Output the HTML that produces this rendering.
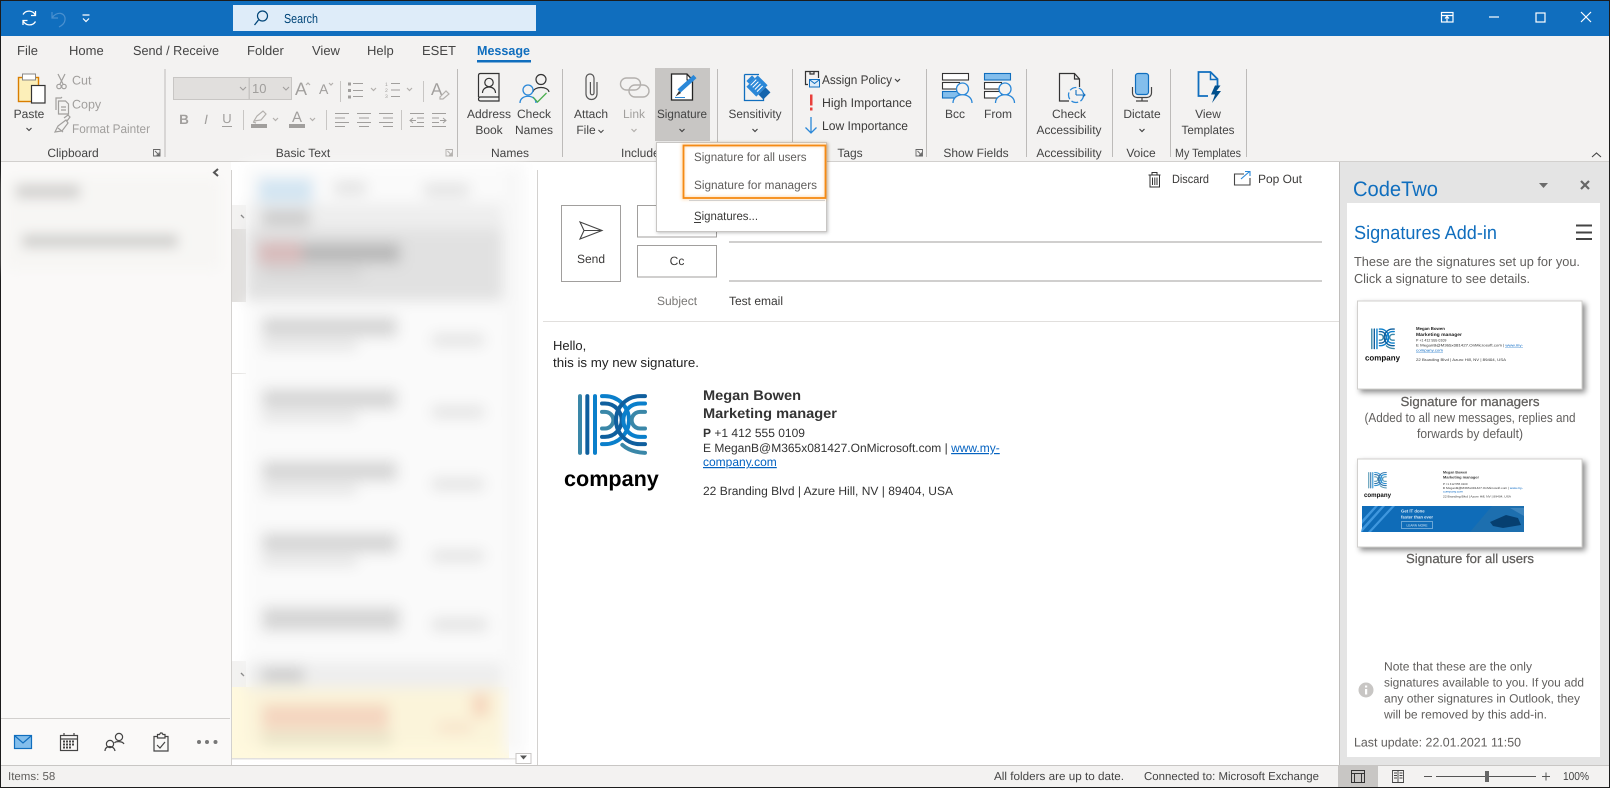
<!DOCTYPE html>
<html><head><meta charset="utf-8"><style>
html,body{margin:0;padding:0;width:1610px;height:788px;overflow:hidden;background:#fff}
svg{display:block;position:absolute;left:0;top:0}
text{font-family:"Liberation Sans",sans-serif;font-size:13px;fill:#3b3a39;text-rendering:geometricPrecision}
.c{text-anchor:middle}
.r{font-size:12px;fill:#444}
.s{font-size:12px;fill:#605e5c}
.p{fill:#605e5c}
.sig{font-size:12px;fill:#333}
.b{font-weight:bold}
.k{fill:none;stroke:#444;stroke-width:1.2}
.gk{fill:none;stroke:#b3b0ad;stroke-width:1.2}
.bl{fill:none;stroke:#106ebe;stroke-width:1.3}
.sep{fill:#bdbbb9}
.tiny{font-size:4px;fill:#444}
</style></head><body>
<svg width="1610" height="788" viewBox="0 0 1610 788" xmlns="http://www.w3.org/2000/svg">
<defs>
<filter id="bl" filterUnits="userSpaceOnUse" x="200" y="150" width="360" height="630"><feGaussianBlur stdDeviation="7"/></filter>
<filter id="bl2" filterUnits="userSpaceOnUse" x="0" y="160" width="231" height="120"><feGaussianBlur stdDeviation="6"/></filter>
<filter id="sh" x="-10%" y="-10%" width="125%" height="125%"><feDropShadow dx="3" dy="3" stdDeviation="3" flood-color="#000" flood-opacity=".45"/></filter>
<filter id="sh2" x="-10%" y="-10%" width="120%" height="120%"><feDropShadow dx="1" dy="1" stdDeviation="1.5" flood-color="#000" flood-opacity=".25"/></filter>
<filter id="gl" x="-10%" y="-20%" width="120%" height="140%"><feGaussianBlur stdDeviation="1.6"/></filter>
<filter id="tb"><feGaussianBlur stdDeviation=".2"/></filter>
<symbol id="logo" viewBox="75 60 225 200">
<g fill="none" stroke-width="12" stroke-linecap="round">
<path d="M90 78V248" stroke="#3a87a8"/><path d="M112 78V248" stroke="#0f5f9e"/><path d="M135 78V248" stroke="#0a7fcb"/>
<path d="M156 125H165A25 25 0 0 1 165 175H156" stroke="#3a87a8"/>
<path d="M156 78H165A72 72 0 0 1 165 222H156" stroke="#0a7fcb"/>
<path d="M156 200H165C195 200 215 175 215 150C215 125 195 100 165 100H156" stroke="#0f5f9e"/>
<path d="M285 125H270A25 25 0 0 0 270 175H285" stroke="#3a87a8"/>
<path d="M285 100H270C240 100 220 125 220 150C220 175 240 200 270 200H285" stroke="#0a7fcb"/>
<path d="M285 78H270A72 72 0 0 0 270 222H285" stroke="#0f5f9e"/>
<path d="M217 224C235 240 260 247 285 248" stroke="#3a87a8"/>
</g>
</symbol>
</defs>

<rect width="1610" height="788" fill="#1c1c1c"/>
<rect x="1" y="1" width="1608" height="35" fill="#106ebe"/>
<rect x="1" y="36" width="1608" height="125" fill="#f3f2f1"/>
<rect x="1" y="161" width="1608" height="1" fill="#d2d0ce"/>
<rect x="1" y="162" width="1608" height="603" fill="#fff"/>
<rect x="1" y="162" width="230" height="603" fill="#faf9f8"/>
<rect x="231" y="170" width="1" height="595" fill="#d2d0ce"/>
<rect x="537" y="170" width="1" height="595" fill="#d2d0ce"/>

<!-- blurred folder -->
<g filter="url(#bl2)">
<rect x="6" y="178" width="215" height="92" fill="#f7f6f4"/>
<rect x="16" y="184" width="64" height="15" fill="#d4d3d1"/>
<rect x="22" y="234" width="156" height="14" fill="#d2d1cf"/>
</g>
<path d="M218 169l-4 3.500 4 3.500" fill="none" stroke="#555" stroke-width="2"/>

<!-- message list -->
<rect x="232" y="205" width="14" height="24" fill="#f3f2f1"/>
<rect x="232" y="229" width="14" height="73" fill="#e1dfdd"/>
<rect x="232" y="373" width="14" height="1" fill="#e1dfdd"/>
<rect x="232" y="661" width="14" height="26" fill="#f3f2f1"/>
<rect x="232" y="687" width="277" height="71" fill="#fff9de"/>
<rect x="232" y="758" width="285" height="1.500" fill="#e1dfdd"/>
<path d="M241 215l3 3M241 673l3 3" stroke="#555" stroke-width="1.400"/>
<g filter="url(#bl)">
<rect x="245" y="165" width="280" height="500" fill="#fafafa"/>
<rect x="505" y="165" width="20" height="590" fill="#f8f8f8"/>
<rect x="258" y="178" width="55" height="26" fill="#d3e5f2"/>
<rect x="334" y="182" width="32" height="12" fill="#e0e0e0"/>
<rect x="424" y="184" width="45" height="12" fill="#e0e0e0"/>
<rect x="245" y="203" width="258" height="28" fill="#eeeeee"/>
<rect x="262" y="210" width="48" height="16" fill="#cbcbcb"/>
<rect x="245" y="229" width="258" height="72" fill="#e1e1e1"/>
<rect x="258" y="241" width="44" height="24" fill="#d8bcbc"/>
<rect x="302" y="243" width="98" height="20" fill="#b8b8b8"/>
<rect x="262" y="268" width="100" height="9" fill="#d2d2d2"/>
<g fill="#d6d6d6">
<rect x="262" y="317" width="135" height="20"/><rect x="262" y="341" width="95" height="9" fill="#e2e2e2"/><rect x="432" y="334" width="52" height="12" fill="#e2e2e2"/>
<rect x="262" y="389" width="135" height="20"/><rect x="262" y="413" width="95" height="9" fill="#e2e2e2"/><rect x="432" y="406" width="52" height="12" fill="#e2e2e2"/>
<rect x="262" y="461" width="135" height="20"/><rect x="262" y="485" width="95" height="9" fill="#e2e2e2"/><rect x="432" y="478" width="52" height="12" fill="#e2e2e2"/>
<rect x="262" y="533" width="135" height="20"/><rect x="262" y="557" width="95" height="9" fill="#e2e2e2"/><rect x="432" y="550" width="52" height="12" fill="#e2e2e2"/>
<rect x="262" y="607" width="138" height="24"/><rect x="432" y="618" width="55" height="13" fill="#e2e2e2"/>
</g>
<rect x="245" y="662" width="258" height="26" fill="#eeeeee"/>
<rect x="262" y="667" width="42" height="16" fill="#cecece"/>
<rect x="245" y="688" width="258" height="58" fill="#fbf4da"/>
<rect x="262" y="704" width="127" height="26" fill="#f4d6c0"/>
<rect x="472" y="693" width="17" height="24" fill="#f6d6bd"/>
<rect x="438" y="722" width="34" height="11" fill="#f8e3cb"/>
<rect x="262" y="733" width="130" height="12" fill="#e7e3c8"/>
</g>
<rect x="516" y="753.500" width="15" height="10" fill="#fff" stroke="#c8c6c4"/>
<path d="M520 755.500h7l-3.500 4z" fill="#555"/>

<!-- nav -->
<rect x="1" y="718" width="229" height="1" fill="#d2d0ce"/>
<rect x="14.500" y="735.500" width="17" height="13" fill="#83beec" stroke="#106ebe" stroke-width="1.200"/>
<path d="M15 736l8 7 8-7" fill="none" stroke="#106ebe" stroke-width="1.200"/>
<rect x="60.500" y="735.500" width="17" height="15" class="k"/><path d="M60 739h18M64 733v3M74 733v3" class="k"/>
<path d="M63 741.500h2m1 0h2m1 0h2m1 0h2M63 744.500h2m1 0h2m1 0h2m1 0h2M63 747.500h2m1 0h2m1 0h2" stroke="#444" stroke-width="2" fill="none"/>
<g class="k"><circle cx="110" cy="744" r="3.600"/><path d="M105 751c0-6 9-6 10 0"/><circle cx="119" cy="737" r="3.600"/><path d="M114.500 743c1-2 8-2 9.500 1"/></g>
<g class="k"><path d="M157 736.500h-3v14.500h14v-14.500h-3"/><path d="M157.500 738v-3.500h2l1-1.500h1.500l1 1.500h2v3.500z"/><path d="M157 745l3 3 5-6"/></g>
<g fill="#777"><circle cx="199" cy="742" r="2"/><circle cx="207" cy="742" r="2"/><circle cx="215.500" cy="742" r="2"/></g>

<!-- title bar -->
<g fill="none" stroke="#fff" stroke-width="1.300">
<path d="M23 14.500A7 7 0 0 1 35.500 15.500M35.500 11v4.500h-4.500"/>
<path d="M35.500 21.500A7 7 0 0 1 23 20.500M23 25v-4.500h4.500"/>
</g>
<path d="M52 12v6h6M52 18C56 11 66 12 65 20C64.500 24 61 26 59 27" fill="none" stroke="#4a90cf" stroke-width="1.200"/>
<path d="M82.500 15h7M83 18.500l3 3 3-3" fill="none" stroke="#fff" stroke-width="1.200"/>
<rect x="233" y="5" width="303" height="26" fill="#deecf9"/>
<circle cx="262.500" cy="16" r="5" fill="none" stroke="#004578" stroke-width="1.200"/>
<path d="M258.500 20L254.500 25" stroke="#004578" stroke-width="1.300"/>
<text x="284" y="23" style="fill:#004578" textLength="34" lengthAdjust="spacingAndGlyphs">Search</text>
<g fill="none" stroke="#fff" stroke-width="1.200">
<rect x="1441.500" y="12.500" width="11.500" height="9.500"/><path d="M1441.500 15.500h11.500M1447 22v-5M1445 18.500l2-2 2 2"/>
<path d="M1489 17h10"/><rect x="1536" y="13" width="9" height="9"/><path d="M1581 12l10 10M1591 12l-10 10"/>
</g>

<!-- tabs -->
<text x="17" y="55" style="fill:#444">File</text>
<text x="69" y="55" style="fill:#444">Home</text>
<text x="133" y="55" style="fill:#444" textLength="86" lengthAdjust="spacingAndGlyphs">Send / Receive</text>
<text x="247" y="55" style="fill:#444">Folder</text>
<text x="312" y="55" style="fill:#444">View</text>
<text x="367" y="55" style="fill:#444">Help</text>
<text x="422" y="55" style="fill:#444">ESET</text>
<text x="477" y="55" style="fill:#106ebe;font-weight:bold" textLength="53" lengthAdjust="spacingAndGlyphs">Message</text>
<rect x="477" y="60" width="54" height="2.500" fill="#106ebe"/>

<!-- separators -->
<g class="sep">
<rect x="164.500" y="69" width="1" height="88"/><rect x="457" y="69" width="1" height="88"/><rect x="562" y="69" width="1" height="88"/><rect x="717" y="69" width="1" height="88"/><rect x="792" y="69" width="1" height="88"/><rect x="926" y="69" width="1" height="88"/><rect x="1026" y="69" width="1" height="88"/><rect x="1112" y="69" width="1" height="88"/><rect x="1170" y="69" width="1" height="88"/><rect x="1246" y="69" width="1" height="88"/>
</g>

<!-- clipboard -->
<rect x="18.500" y="77.500" width="20" height="24" fill="#fcefb9" stroke="#d97e00" stroke-width="1.400"/>
<rect x="22.500" y="74" width="13" height="6" fill="#fff" stroke="#8a8886"/>
<rect x="31.500" y="85.500" width="13.500" height="17.500" fill="#fff" stroke="#333" stroke-width="1.200"/>
<text x="29" y="118" class="c r">Paste</text>
<path d="M26.500 128l2.500 2.500 2.500-2.500" fill="none" stroke="#444" stroke-width="1.100"/>
<g class="gk" style="stroke:#a19f9d"><path d="M58 74l5 10M65 74l-5 10"/><circle cx="59" cy="86.500" r="2.200"/><circle cx="64" cy="86.500" r="2.200"/>
<path d="M56 110v-12h5l1-1M58.500 112v-11h7l3 3v10h-10zM61 107h5M61 110h5"/>
<path d="M55 132l3-6 8-6 2 3-6 8zM58 128l5 4M64 118l4-3 2 2-3 4"/></g>
<text x="72" y="84.500" style="fill:#a19f9d;font-size:12.500px">Cut</text>
<text x="72" y="108.500" style="fill:#a19f9d;font-size:12.500px">Copy</text>
<text x="72" y="133" style="fill:#a19f9d;font-size:12.500px" textLength="78" lengthAdjust="spacingAndGlyphs">Format Painter</text>
<text x="73" y="157" class="c" style="font-size:12px;fill:#444">Clipboard</text>
<path d="M153.500 149.500h6.500v6.500h-6.500zM155 151l4 4M159 152.500v2.500h-2.500" fill="none" stroke="#666" stroke-width=".9"/>

<!-- basic text -->
<rect x="173.500" y="77.500" width="75.500" height="22" fill="#e1dfdd" stroke="#c8c6c4"/>
<rect x="249.500" y="77.500" width="42" height="22" fill="#e1dfdd" stroke="#c8c6c4"/>
<text x="252" y="93" style="fill:#a19f9d">10</text>
<path d="M240 87l3 3 3-3M283 87l3 3 3-3" fill="none" stroke="#a19f9d" stroke-width="1.100"/>
<text x="295" y="95" style="font-size:18px;fill:#a19f9d">A</text><path d="M306 85l2-2 2 2" class="gk" stroke-width="1"/>
<text x="319" y="94" style="font-size:14px;fill:#a19f9d">A</text><path d="M329 83l2 2 2-2" class="gk"/>
<rect x="340" y="81" width="1" height="21" fill="#c8c6c4"/>
<path d="M348 84h3M348 90.500h3M348 97h3" stroke="#a19f9d" stroke-width="3"/>
<path d="M353 83.500h10M353 90.500h10M353 96.500h10" stroke="#a19f9d" stroke-width="1"/>
<path d="M371 88l2.500 2.500 2.500-2.500M407 88l2.500 2.500 2.500-2.500" class="gk"/>
<text x="385" y="86" style="font-size:5px;fill:#a19f9d">1</text><text x="385" y="92" style="font-size:5px;fill:#a19f9d">2</text><text x="385" y="98" style="font-size:5px;fill:#a19f9d">3</text>
<path d="M391 83.500h9M391 90h9M391 96.500h9" stroke="#a19f9d" stroke-width="1"/>
<rect x="423" y="81" width="1" height="21" fill="#c8c6c4"/>
<text x="431" y="95" style="font-size:17px;fill:#a19f9d">A</text>
<path d="M440 97l6-6 3 3-6 5h-3z" class="gk"/>
<text x="184" y="124" class="c b" style="font-size:13.500px;fill:#a19f9d">B</text>
<text x="206" y="124" class="c" style="font-style:italic;font-size:13.500px;fill:#a19f9d">I</text>
<text x="227" y="123" class="c" style="fill:#a19f9d">U</text><path d="M222 126.500h10" stroke="#a19f9d"/>
<rect x="243" y="110" width="1" height="20" fill="#c8c6c4"/>
<path d="M254 121l3-5 6-5 3 3-5 6zM253 122l3 1" class="gk"/><rect x="251" y="124" width="16" height="4" fill="#a19f9d"/>
<path d="M273 118l2.500 2.500 2.500-2.500M310 118l2.500 2.500 2.500-2.500" class="gk"/>
<text x="297" y="122" class="c" style="font-size:15px;fill:#a19f9d">A</text><rect x="289" y="124" width="16" height="4" fill="#a19f9d"/>
<rect x="326" y="110" width="1" height="20" fill="#c8c6c4"/>
<path d="M335 113.500h14M335 118h10M335 122.500h14M335 126.500h10M357 113.500h14M359 118h10M357 122.500h14M359 126.500h10M379 113.500h14M383 118h10M379 122.500h14M383 126.500h10" stroke="#a19f9d" fill="none"/>
<rect x="401" y="110" width="1" height="20" fill="#c8c6c4"/>
<path d="M410 113.500h14M417 118h7M417 122.500h7M410 126.500h14M413 118l-3 2.500 3 2.500M410 120.500h6M432 113.500h14M432 118h7M432 122.500h7M432 126.500h14M443 118l3 2.500-3 2.500M440 120.500h6" stroke="#a19f9d" fill="none"/>
<text x="303" y="157" class="c" style="font-size:12px;fill:#444">Basic Text</text>
<path d="M446 149.500h6.500v6.500h-6.500zM447.500 151l4 4M451.500 152.500v2.500h-2.500" fill="none" stroke="#b3b0ad" stroke-width=".9"/>

<!-- names -->
<g class="k" style="stroke:#333">
<path d="M478.500 97V75.500q0-2 2-2h18.500v27.500h-18.500q-2 0-2-2q0-2 2-2h18.500"/>
<circle cx="489" cy="82.500" r="4.200"/><path d="M482.500 93c0-8 13-8 13 0"/>
</g>
<text x="489" y="118" class="c r">Address</text><text x="489" y="134" class="c r">Book</text>
<g class="k" style="stroke:#333"><circle cx="541" cy="79.500" r="5"/><path d="M533 92c1-6 15-6 16 0"/></g>
<g fill="none" stroke="#2b88d8" stroke-width="1.300"><circle cx="528" cy="90" r="5"/><path d="M520 103c0-9 16-9 16 0"/></g>
<path d="M533 97l4.500 5 9-9" fill="none" stroke="#4caf50" stroke-width="1.300"/>
<text x="534" y="118" class="c r">Check</text><text x="534" y="134" class="c r">Names</text>
<text x="510" y="157" class="c" style="font-size:12px;fill:#444">Names</text>

<!-- include -->
<path d="M597 82V94a5.500 5.500 0 0 1-11 0V78a4 4 0 0 1 8 0V93a1.800 1.800 0 0 1-3.600 0V82" fill="none" stroke="#555" stroke-width="1.200"/>
<text x="591" y="118" class="c r">Attach</text><text x="586" y="134" class="c r">File</text>
<path d="M598.500 130l2.500 2.500 2.500-2.500" class="k" style="stroke-width:1"/>
<rect x="620.500" y="78" width="20" height="12" rx="6" class="gk" style="stroke-width:1.400"/>
<rect x="629" y="85" width="20" height="12" rx="6" class="gk" style="stroke-width:1.400"/>
<text x="634" y="118" class="c r" style="fill:#a19f9d">Link</text>
<path d="M631.500 129l2.500 2.500 2.500-2.500" class="gk"/>
<text x="621" y="157" style="font-size:12px;fill:#444">Include</text>

<rect x="655" y="68" width="55" height="73" fill="#c8c6c4"/>
<path d="M671.500 100V74H687l5.500 6V100z" fill="#fff" stroke="#222" stroke-width="1.300"/><path d="M687 74v6h5.500" fill="none" stroke="#222"/>
<path d="M679 91L695 76.500" stroke="#2b88d8" stroke-width="4.500"/>
<path d="M679 91l-3.500 5.500 5.500-3.500z" fill="#333"/><path d="M675 97.500h10" stroke="#2b88d8" stroke-width="1"/>
<text x="682" y="118" class="c r" textLength="50" lengthAdjust="spacingAndGlyphs">Signature</text>
<path d="M679.500 129l2.500 2.500 2.500-2.500" class="k"/>

<!-- sensitivity -->
<path d="M744.500 74.500h14.500M744.500 74.500V100.500h19V92" class="bl"/>
<g transform="rotate(45 757 86)"><rect x="750" y="78" width="14" height="16" fill="#2b88d8"/><rect x="746" y="82" width="4" height="8" fill="#2b88d8"/><rect x="764" y="81" width="7" height="10" fill="#1565ad"/><path d="M752 82v8M755 82v8M758 82v8M761 82v8" stroke="#fff" stroke-width="1"/></g>
<text x="755" y="118" class="c r" textLength="53" lengthAdjust="spacingAndGlyphs">Sensitivity</text>
<path d="M752.500 129l2.500 2.500 2.500-2.500" class="k"/>

<!-- tags -->
<path d="M808 84.500h-2.500V71.500h13V78M810 71.500v2.500h4v-2.500" class="k" style="stroke:#333"/>
<rect x="809.500" y="79.500" width="10" height="7.500" fill="#deecf9" stroke="#106ebe"/><path d="M810 80l4.500 3.500 4.500-3.500" class="bl" style="stroke-width:1"/>
<text x="822" y="84" style="font-size:12.500px" textLength="70" lengthAdjust="spacingAndGlyphs">Assign Policy</text>
<path d="M895 79l2.500 2.500 2.500-2.500" class="k"/>
<rect x="810" y="94.500" width="2.500" height="11" fill="#e8403c"/><rect x="810" y="107.500" width="2.500" height="3" fill="#e8403c"/>
<text x="822" y="107" style="font-size:12.500px" textLength="90" lengthAdjust="spacingAndGlyphs">High Importance</text>
<path d="M811 117v16M805.500 127.500l5.500 5.500 5.500-5.500" fill="none" stroke="#2b88d8" stroke-width="1.300"/>
<text x="822" y="130" style="font-size:12.500px" textLength="86" lengthAdjust="spacingAndGlyphs">Low Importance</text>
<text x="850" y="157" class="c" style="font-size:12px;fill:#444">Tags</text>
<path d="M916 149.500h6.500v6.500h-6.500zM917.500 151l4 4M921.500 152.500v2.500h-2.500" fill="none" stroke="#666" stroke-width=".9"/>

<!-- show fields -->
<g fill="#fff" stroke="#333" stroke-width="1.100"><rect x="942.500" y="73.500" width="26" height="6.500"/><rect x="942.500" y="82.500" width="17" height="6.500"/></g>
<rect x="942.500" y="91.500" width="17" height="6.500" fill="#83beec" stroke="#106ebe" stroke-width="1.100"/>
<circle cx="962.500" cy="89" r="6" fill="#f3f2f1" stroke="#2b88d8" stroke-width="1.300"/><path d="M953 103c0-11 19-11 19 0" fill="#f3f2f1" stroke="#2b88d8" stroke-width="1.300"/>
<text x="955" y="118" class="c r">Bcc</text>
<rect x="984.500" y="73.500" width="26" height="6.500" fill="#83beec" stroke="#106ebe" stroke-width="1.100"/>
<g fill="#fff" stroke="#333" stroke-width="1.100"><rect x="984.500" y="82.500" width="17" height="6.500"/><rect x="984.500" y="91.500" width="17" height="6.500"/></g>
<circle cx="1005" cy="89" r="6" fill="#f3f2f1" stroke="#2b88d8" stroke-width="1.300"/><path d="M995.500 103c0-11 19-11 19 0" fill="#f3f2f1" stroke="#2b88d8" stroke-width="1.300"/>
<text x="998" y="118" class="c r">From</text>
<text x="976" y="157" class="c" style="font-size:12px;fill:#444">Show Fields</text>

<!-- accessibility -->
<path d="M1069 101h-9.500V73.500h15l5 5.500v8" class="k" style="stroke:#333"/><path d="M1074.500 73.500v5.500h5" class="k" style="stroke:#333"/>
<circle cx="1076" cy="95" r="7.500" fill="none" stroke="#2b88d8" stroke-width="1.300" stroke-dasharray="7 2.500"/>
<path d="M1076 90v5M1076 95h9M1083 93l2 2-2 2" fill="none" stroke="#106ebe" stroke-width="1.100"/>
<text x="1069" y="118" class="c r">Check</text><text x="1069" y="134" class="c r" textLength="65" lengthAdjust="spacingAndGlyphs">Accessibility</text>
<text x="1069" y="157" class="c" style="font-size:12px;fill:#444">Accessibility</text>

<!-- voice -->
<rect x="1135.500" y="73.500" width="13" height="21" rx="2.500" fill="#83beec" stroke="#106ebe" stroke-width="1.200"/>
<path d="M1132.500 87v6a4.500 4.500 0 0 0 4.500 4.500h10a4.500 4.500 0 0 0 4.500-4.500v-6M1142 97.500v3M1136 101h12" class="k"/>
<text x="1142" y="118" class="c r">Dictate</text>
<path d="M1139.500 129l2.500 2.500 2.500-2.500" class="k"/>
<text x="1141" y="157" class="c" style="font-size:12px;fill:#444">Voice</text>

<!-- templates -->
<path d="M1208 96h-9.500V72h12l7 7v9" fill="none" stroke="#106ebe" stroke-width="1.800"/><path d="M1210.500 72v7.500h7" fill="none" stroke="#106ebe" stroke-width="1.500"/>
<path d="M1215 85.500l-4 9h4l-3 8.500 9-12h-4.500l4-5.500z" fill="#004f8c"/>
<text x="1208" y="118" class="c r">View</text><text x="1208" y="134" class="c r" textLength="53" lengthAdjust="spacingAndGlyphs">Templates</text>
<text x="1208" y="157" class="c" style="font-size:12px;fill:#444" textLength="66" lengthAdjust="spacingAndGlyphs">My Templates</text>
<path d="M1592 157l4.500-4 4.500 4" fill="none" stroke="#444" stroke-width="1.100"/>

<!-- compose -->
<rect x="561.500" y="205.500" width="59" height="76" fill="#fff" stroke="#a19f9d"/>
<path d="M580 222L602 230.500L580 239L584 230.500ZM584 230.500H602" fill="none" stroke="#444" stroke-width="1.100"/>
<text x="591" y="263" class="c" style="font-size:12px">Send</text>
<rect x="637.500" y="205.500" width="79" height="31.500" fill="#fff" stroke="#a19f9d"/>
<rect x="637.500" y="245.500" width="79" height="31.500" fill="#fff" stroke="#a19f9d"/>
<text x="677" y="265" class="c" style="font-size:12px">Cc</text>
<rect x="729" y="241.500" width="593" height="1" fill="#a19f9d"/>
<rect x="729" y="280.500" width="593" height="1" fill="#a19f9d"/>
<text x="657" y="305" style="font-size:12px;fill:#797775">Subject</text>
<text x="729" y="305" style="font-size:12px">Test email</text>
<rect x="543" y="321" width="796" height="1" fill="#e1dfdd"/>
<path d="M1148.500 175h12M1152 175v-2.500h5v2.500M1150 175v12h9.500v-12M1152.500 177.500v7.500M1154.800 177.500v7.500M1157 177.500v7.500" class="k" style="stroke:#333;stroke-width:1"/>
<text x="1172" y="183" style="font-size:12px;fill:#3b3a39" textLength="37" lengthAdjust="spacingAndGlyphs">Discard</text>
<path d="M1244 174h-9.500v11h15.500v-7" fill="none" stroke="#444" stroke-width="1.100"/><path d="M1241 179l8.500-7.500M1245 171.500h5v4.500" fill="none" stroke="#2b88d8" stroke-width="1.100"/>
<text x="1258" y="183" style="font-size:12px;fill:#3b3a39" textLength="44" lengthAdjust="spacingAndGlyphs">Pop Out</text>

<!-- body -->
<text x="553" y="350" style="fill:#222;font-size:13px">Hello,</text>
<text x="553" y="367" style="fill:#222;font-size:13px" textLength="146" lengthAdjust="spacingAndGlyphs">this is my new signature.</text>
<use href="#logo" x="575" y="390" width="75" height="67"/>
<text x="564" y="486" style="font-size:21.600px;font-weight:bold;fill:#000">company</text>
<text x="703" y="400" class="b" style="font-size:14px;fill:#333" textLength="98" lengthAdjust="spacingAndGlyphs">Megan Bowen</text>
<text x="703" y="418" class="b" style="font-size:14px;fill:#333" textLength="134" lengthAdjust="spacingAndGlyphs">Marketing manager</text>
<text x="703" y="437" class="sig" textLength="102" lengthAdjust="spacingAndGlyphs"><tspan class="b">P</tspan> +1 412 555 0109</text>
<text x="703" y="452" class="sig">E MeganB@M365x081427.OnMicrosoft.com | <tspan style="fill:#0563c1" text-decoration="underline">www.my-</tspan></text>
<text x="703" y="466" class="sig" style="fill:#0563c1" text-decoration="underline">company.com</text>
<text x="703" y="495" class="sig" textLength="250" lengthAdjust="spacingAndGlyphs">22 Branding Blvd | Azure Hill, NV | 89404, USA</text>

<!-- dropdown -->
<rect x="656.500" y="142.500" width="170" height="89" fill="#fff" stroke="#c8c6c4" filter="url(#sh2)"/>
<rect x="683" y="145" width="143" height="53" fill="none" stroke="#f7941d" stroke-width="3" opacity=".35" filter="url(#gl)"/>
<rect x="683.500" y="145.500" width="142" height="52.500" fill="none" stroke="#f58a14" stroke-width="1.800"/>
<text x="694" y="161" style="font-size:12px;fill:#605e5c" textLength="112.500" lengthAdjust="spacingAndGlyphs">Signature for all users</text>
<text x="694" y="189" style="font-size:12px;fill:#605e5c" textLength="123" lengthAdjust="spacingAndGlyphs">Signature for managers</text>
<rect x="689" y="200" width="136" height="1" fill="#d2d0ce"/>
<text x="694" y="220" style="font-size:12px;fill:#3b3a39" textLength="64" lengthAdjust="spacingAndGlyphs">Signatures...</text>
<path d="M694 222.500h7" stroke="#3b3a39"/>

<!-- right pane -->
<rect x="1339" y="162" width="270" height="603" fill="#e4e4e4"/>
<rect x="1339" y="162" width="1" height="603" fill="#c0bebc"/>
<text x="1353" y="196" style="font-size:21px;fill:#106ebe" textLength="85" lengthAdjust="spacingAndGlyphs">CodeTwo</text>
<path d="M1539 183h9l-4.500 5z" fill="#6b6b6b"/>
<path d="M1581 181l8 8M1589 181l-8 8" stroke="#666" stroke-width="2.200"/>
<rect x="1347" y="203" width="253" height="554" fill="#fff"/>
<text x="1354" y="239" style="font-size:19px;fill:#106ebe" textLength="143" lengthAdjust="spacingAndGlyphs">Signatures Add-in</text>
<path d="M1576 225.500h16M1576 232.500h16M1576 239h16" stroke="#444" stroke-width="1.900"/>
<text x="1354" y="266" class="p" textLength="226" lengthAdjust="spacingAndGlyphs">These are the signatures set up for you.</text>
<text x="1354" y="283" class="p" textLength="176" lengthAdjust="spacingAndGlyphs">Click a signature to see details.</text>

<!-- card1 -->
<rect x="1357.500" y="301" width="224.500" height="88" fill="#fff" stroke="#d2d0ce" filter="url(#sh)"/>
<g filter="url(#tb)">
<use href="#logo" x="1370" y="327" width="26" height="23"/>
<text x="1365" y="360.500" style="font-size:8px;font-weight:bold;fill:#111" textLength="35" lengthAdjust="spacingAndGlyphs">company</text>
<text x="1416" y="330" class="tiny b" style="font-size:4.300px;fill:#222">Megan Bowen</text>
<text x="1416" y="336" class="tiny b" style="font-size:4.600px;fill:#222" textLength="46" lengthAdjust="spacingAndGlyphs">Marketing manager</text>
<text x="1416" y="341.500" style="font-size:3.600px;fill:#333">P +1 412 555 0109</text>
<text x="1416" y="346.500" style="font-size:3.600px;fill:#333" textLength="107" lengthAdjust="spacingAndGlyphs">E MeganB@M365x081427.OnMicrosoft.com | <tspan style="fill:#0563c1">www.my-</tspan></text>
<text x="1416" y="351.500" style="font-size:3.600px;fill:#0563c1" textLength="27" lengthAdjust="spacingAndGlyphs">company.com</text>
<rect x="1416" y="352" width="27" height=".5" fill="#0563c1" opacity=".6"/>
<rect x="1505" y="347" width="18" height=".5" fill="#0563c1" opacity=".6"/>
<text x="1416" y="361" style="font-size:3.600px;fill:#333" textLength="90" lengthAdjust="spacingAndGlyphs">22 Branding Blvd | Azure Hill, NV | 89404, USA</text>
</g>
<text x="1470" y="406" class="c" style="fill:#605e5c;stroke:#605e5c;stroke-width:.25" textLength="139" lengthAdjust="spacingAndGlyphs">Signature for managers</text>
<text x="1470" y="422" class="c p" textLength="211" lengthAdjust="spacingAndGlyphs">(Added to all new messages, replies and</text>
<text x="1470" y="438" class="c p" textLength="106" lengthAdjust="spacingAndGlyphs">forwards by default)</text>

<!-- card2 -->
<rect x="1357.500" y="459" width="224.500" height="88" fill="#fff" stroke="#d2d0ce" filter="url(#sh)"/>
<g filter="url(#tb)">
<use href="#logo" x="1367" y="471" width="21" height="18" opacity=".85"/>
<text x="1364" y="497" style="font-size:6.500px;font-weight:bold;fill:#111" textLength="27" lengthAdjust="spacingAndGlyphs">company</text>
<text x="1443" y="473.500" style="font-size:3.600px;font-weight:bold;fill:#333">Megan Bowen</text>
<text x="1443" y="478.500" style="font-size:3.600px;font-weight:bold;fill:#333" textLength="36" lengthAdjust="spacingAndGlyphs">Marketing manager</text>
<text x="1443" y="485" style="font-size:2.900px;fill:#333">P +1 412 555 0109</text>
<text x="1443" y="489" style="font-size:2.900px;fill:#333" textLength="80" lengthAdjust="spacingAndGlyphs">E MeganB@M365x081427.OnMicrosoft.com | <tspan style="fill:#0563c1">www.my-</tspan></text>
<text x="1443" y="492.500" style="font-size:2.900px;fill:#0563c1" textLength="20" lengthAdjust="spacingAndGlyphs">company.com</text>
<text x="1443" y="497.500" style="font-size:2.900px;fill:#333" textLength="68" lengthAdjust="spacingAndGlyphs">22 Branding Blvd | Azure Hill, NV | 89404, USA</text>
</g>
<rect x="1362" y="506" width="162" height="26" fill="#0f6cb8"/>
<path d="M1362 520l13-14h3l-16 18zM1362 528l20-22h3l-23 26h-1zM1368 532l24-26h3l-24 26z" fill="#3f97de"/>
<path d="M1470 532l22-26h32v26z" fill="#1d6faf"/>
<path d="M1490 522l16-7 12 3 3 7-18 3-10-2z" fill="#063f70"/>
<path d="M1510 508h14v8z" fill="#4b8fc4" opacity=".7"/>
<text x="1401" y="512.500" class="b" style="font-size:4.300px;fill:#dbeaf7">Get IT done</text>
<text x="1401" y="518.500" class="b" style="font-size:4.300px;fill:#dbeaf7">faster than ever</text>
<rect x="1401.500" y="521.500" width="31" height="7" fill="none" stroke="#a8cdea" stroke-width=".6"/>
<text x="1417" y="526.500" class="c" style="font-size:3.200px;fill:#cfe3f3">LEARN MORE</text>
<text x="1470" y="563" class="c" style="fill:#605e5c;stroke:#605e5c;stroke-width:.25" textLength="128" lengthAdjust="spacingAndGlyphs">Signature for all users</text>

<!-- note -->
<circle cx="1366" cy="690" r="7.500" fill="#c8c6c4"/>
<rect x="1365" y="689" width="2.200" height="5.500" fill="#fff"/><rect x="1365" y="685.500" width="2.200" height="2" fill="#fff"/>
<text x="1384" y="670.500" style="font-size:12px;fill:#605e5c" textLength="148" lengthAdjust="spacingAndGlyphs">Note that these are the only</text>
<text x="1384" y="686.500" style="font-size:12px;fill:#605e5c" textLength="200" lengthAdjust="spacingAndGlyphs">signatures available to you. If you add</text>
<text x="1384" y="702.500" style="font-size:12px;fill:#605e5c" textLength="196" lengthAdjust="spacingAndGlyphs">any other signatures in Outlook, they</text>
<text x="1384" y="718.500" style="font-size:12px;fill:#605e5c" textLength="163" lengthAdjust="spacingAndGlyphs">will be removed by this add-in.</text>
<text x="1354" y="746.500" class="p" style="font-size:12.500px" textLength="167" lengthAdjust="spacingAndGlyphs">Last update: 22.01.2021 11:50</text>

<!-- status bar -->
<rect x="1" y="765" width="1608" height="1" fill="#c8c6c4"/>
<rect x="1" y="766" width="1608" height="21" fill="#f3f2f1"/>
<rect x="1338" y="766" width="40" height="21" fill="#c8c6c4"/>
<text x="8" y="780" style="font-size:11.500px;fill:#605e5c">Items: 58</text>
<text x="994" y="780" style="font-size:11.500px;fill:#444" textLength="130" lengthAdjust="spacingAndGlyphs">All folders are up to date.</text>
<text x="1144" y="780" style="font-size:11.500px;fill:#444" textLength="175" lengthAdjust="spacingAndGlyphs">Connected to: Microsoft Exchange</text>
<path d="M1351.500 770.500h13v12h-13zM1351.500 773.500h13M1354.500 773.500v9M1361.500 773.500v9" fill="none" stroke="#333"/>
<path d="M1392.500 770.500h5.500v12h-5.500zM1398 770.500h5.500v12h-5.500zM1394 773h3M1394 775.500h3M1394 778h3M1399.500 773h3M1399.500 775.500h3M1399.500 778h3" fill="none" stroke="#444" stroke-width=".9"/>
<path d="M1424 776.500h8M1436 776.500h100M1542 776.500h8M1546 772.500v8" stroke="#555" stroke-width="1" fill="none"/>
<rect x="1485" y="771" width="4" height="11" fill="#666"/>
<text x="1563" y="780" style="font-size:11.500px;fill:#444" textLength="26" lengthAdjust="spacingAndGlyphs">100%</text>
</svg>
</body></html>
